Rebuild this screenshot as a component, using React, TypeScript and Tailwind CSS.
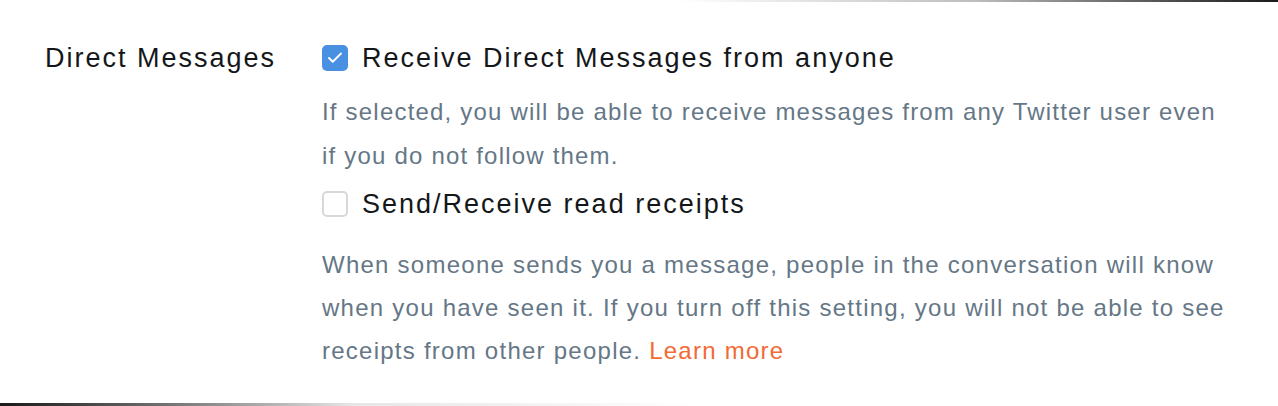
import { Check } from 'lucide-react'

function Box({ checked }: { checked: boolean }) {
  return checked ? (
    <span className="flex h-[26px] w-[26px] shrink-0 items-center justify-center rounded-[5px] bg-[#4a90e2]">
      <Check className="h-[18px] w-[18px] text-white" strokeWidth={2.5} />
    </span>
  ) : (
    <span className="h-[26px] w-[26px] shrink-0 rounded-[5px] border-2 border-[#d6d9dc] bg-white" />
  )
}

export default function App() {
  return (
    <div
      className="relative h-[406px] w-[1278px] overflow-hidden bg-white"
      style={{ fontFamily: '"Liberation Sans", Arial, sans-serif' }}
    >
      <div className="absolute right-0 top-0 h-[2px] w-[600px] bg-gradient-to-r from-transparent via-[#bdbdbd] to-[#1a1a1a]" />
      <div className="absolute bottom-0 left-0 h-[3px] w-[700px] bg-gradient-to-r from-[#1a1a1a] via-[#e6e6e6] to-transparent" />

      <div className="flex pl-[45px] pt-[40px]">
        <div className="w-[277px] shrink-0 text-[27px] leading-[36px] tracking-[2px] text-[#14171a]">
          Direct Messages
        </div>
        <div className="flex flex-col">
          <label className="flex h-[36px] items-center gap-[14px]">
            <Box checked />
            <span className="text-[27px] tracking-[2px] text-[#14171a]">
              Receive Direct Messages from anyone
            </span>
          </label>
          <p className="mt-[14px] whitespace-nowrap text-[24px] leading-[44px] tracking-[1.2px] text-[#657786]">
            If selected, you will be able to receive messages from any Twitter user even
            <br />
            if you do not follow them.
          </p>
          <label className="mt-[8px] flex h-[36px] items-center gap-[14px]">
            <Box checked={false} />
            <span className="text-[27px] tracking-[2px] text-[#14171a]">
              Send/Receive read receipts
            </span>
          </label>
          <p className="mt-[21px] whitespace-nowrap text-[24px] leading-[43px] tracking-[1.25px] text-[#657786]">
            When someone sends you a message, people in the conversation will know
            <br />
            when you have seen it. If you turn off this setting, you will not be able to see
            <br />
            receipts from other people. <span className="text-[#f26a34]">Learn more</span>
          </p>
        </div>
      </div>
    </div>
  )
}
